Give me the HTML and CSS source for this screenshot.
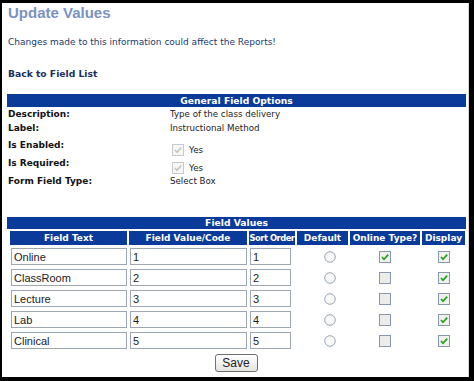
FILE: index.html
```html
<!DOCTYPE html>
<html lang="en">
<head>
  <meta charset="UTF-8" />
  <title>Update Values</title>
  <link rel="stylesheet" href="styles.css">
</head>
<body>
  <svg class="defs" width="0" height="0">
    <symbol id="cb-on" viewBox="0 0 12 12">
      <rect x="0.5" y="0.5" width="11" height="11" fill="#f1f1ec" stroke="#8797ad"/>
      <path d="M3 6 L5 8.3 L9.2 3.6" fill="none" stroke="#22a022" stroke-width="1.7"/>
    </symbol>
    <symbol id="cb-off" viewBox="0 0 12 12">
      <rect x="0.5" y="0.5" width="11" height="11" fill="#ececea" stroke="#8797ad"/>
    </symbol>
    <symbol id="cb-dis" viewBox="0 0 12 12">
      <rect x="0.5" y="0.5" width="11" height="11" fill="#f6f6f4" stroke="#cacaca"/>
      <path d="M3 6 L5 8.3 L9.2 3.6" fill="none" stroke="#c4c4c4" stroke-width="1.5"/>
    </symbol>
    <symbol id="radio" viewBox="0 0 12 12">
      <circle cx="6" cy="6" r="5.3" fill="#f7f7f5" stroke="#9aa6b6"/>
    </symbol>
  </svg>

  <div class="page">
    <h1 class="title">Update Values</h1>
    <p class="note">Changes made to this information could affect the Reports!</p>
    <a class="back" href="#">Back to Field List</a>

    <div class="bar bar-general">General Field Options</div>
    <div class="opt">
      <span class="opt-label">Description:</span>
      <span class="opt-value">Type of the class delivery</span>
    </div>
    <div class="opt">
      <span class="opt-label">Label:</span>
      <span class="opt-value">Instructional Method</span>
    </div>
    <div class="opt opt-flag">
      <span class="opt-label">Is Enabled:</span>
      <span class="opt-value flag"><svg class="box"><use href="#cb-dis"/></svg>Yes</span>
    </div>
    <div class="opt opt-flag">
      <span class="opt-label">Is Required:</span>
      <span class="opt-value flag"><svg class="box"><use href="#cb-dis"/></svg>Yes</span>
    </div>
    <div class="opt opt-last">
      <span class="opt-label">Form Field Type:</span>
      <span class="opt-value">Select Box</span>
    </div>

    <div class="bar bar-values">Field Values</div>
    <table class="values">
      <colgroup>
        <col style="width:117px">
        <col style="width:118px">
        <col style="width:46px">
        <col style="width:51px">
        <col style="width:70px">
        <col>
      </colgroup>
      <thead>
        <tr>
          <th>Field Text</th>
          <th>Field Value/Code</th>
          <th class="tight">Sort Order</th>
          <th>Default</th>
          <th>Online Type?</th>
          <th>Display</th>
        </tr>
      </thead>
      <tbody>
        <tr>
          <td class="in"><input class="txt" type="text" value="Online"></td>
          <td class="in"><input class="txt" type="text" value="1"></td>
          <td class="in"><input class="txt sort" type="text" value="1"></td>
          <td class="def"><svg class="box"><use href="#radio"/></svg></td>
          <td><svg class="box"><use href="#cb-on"/></svg></td>
          <td><svg class="box"><use href="#cb-on"/></svg></td>
        </tr>
        <tr>
          <td class="in"><input class="txt" type="text" value="ClassRoom"></td>
          <td class="in"><input class="txt" type="text" value="2"></td>
          <td class="in"><input class="txt sort" type="text" value="2"></td>
          <td class="def"><svg class="box"><use href="#radio"/></svg></td>
          <td><svg class="box"><use href="#cb-off"/></svg></td>
          <td><svg class="box"><use href="#cb-on"/></svg></td>
        </tr>
        <tr>
          <td class="in"><input class="txt" type="text" value="Lecture"></td>
          <td class="in"><input class="txt" type="text" value="3"></td>
          <td class="in"><input class="txt sort" type="text" value="3"></td>
          <td class="def"><svg class="box"><use href="#radio"/></svg></td>
          <td><svg class="box"><use href="#cb-off"/></svg></td>
          <td><svg class="box"><use href="#cb-on"/></svg></td>
        </tr>
        <tr>
          <td class="in"><input class="txt" type="text" value="Lab"></td>
          <td class="in"><input class="txt" type="text" value="4"></td>
          <td class="in"><input class="txt sort" type="text" value="4"></td>
          <td class="def"><svg class="box"><use href="#radio"/></svg></td>
          <td><svg class="box"><use href="#cb-off"/></svg></td>
          <td><svg class="box"><use href="#cb-on"/></svg></td>
        </tr>
        <tr>
          <td class="in"><input class="txt" type="text" value="Clinical"></td>
          <td class="in"><input class="txt" type="text" value="5"></td>
          <td class="in"><input class="txt sort" type="text" value="5"></td>
          <td class="def"><svg class="box"><use href="#radio"/></svg></td>
          <td><svg class="box"><use href="#cb-off"/></svg></td>
          <td><svg class="box"><use href="#cb-on"/></svg></td>
        </tr>
      </tbody>
    </table>
    <div class="actions">
      <button type="submit" class="save">Save</button>
    </div>
  </div>
</body>
</html>
```

FILE: styles.css
```css
html, body {
  margin: 0;
  height: 100%;
}
body {
  background: #000;
  font-family: "DejaVu Sans", Verdana, sans-serif;
  overflow: hidden;
}
.defs {
  position: absolute;
}
.page {
  background: #fff;
  margin: 3px 5px 0 2px;
  height: 374px;
  border-right: 1px solid #d8d8d8;
  box-sizing: border-box;
  padding-top: 1px;
}
.title {
  font: bold 15px/18px "Liberation Sans", Arial, sans-serif;
  color: #7b92c2;
  margin: 0 0 0 6px;
}
.note {
  font-size: 9px;
  line-height: 12px;
  color: #203a6e;
  margin: 14px 0 0 6px;
}
.back {
  display: block;
  font-weight: bold;
  font-size: 9.2px;
  line-height: 14px;
  color: #1a2f5c;
  text-decoration: none;
  margin: 19px 0 0 6px;
}
.bar {
  margin-left: 5px;
  width: 459px;
  background: #0a3a9a;
  color: #fff;
  font-weight: bold;
  font-size: 9.2px;
  line-height: 13px;
  text-align: center;
}
.bar-general {
  margin-top: 13px;
}
.bar-values {
  margin-top: 29px;
  line-height: 12px;
}
.opt {
  display: grid;
  grid-template-columns: 163px 1fr;
  margin-left: 5px;
  line-height: 14px;
}
.opt-label {
  padding-left: 1px;
  font-weight: bold;
  font-size: 9px;
  color: #111;
}
.opt-value {
  font-size: 8.7px;
  color: #222;
}
.opt-flag {
  height: 18px;
}
.opt-flag .opt-label {
  padding-top: 3px;
}
.flag {
  display: flex;
  align-items: flex-end;
  gap: 5px;
  padding: 9px 0 0 2px;
  line-height: 11px;
}
.opt-last {
  padding-top: 3px;
}
.box {
  width: 12px;
  height: 12px;
  display: block;
}
.values {
  margin-left: 6px;
  width: 459px;
  border-spacing: 2px;
  table-layout: fixed;
}
.values th {
  background: #0a3a9a;
  color: #fff;
  font-size: 9px;
  font-weight: bold;
  height: 14px;
  line-height: 14px;
  padding: 0;
  white-space: nowrap;
  overflow: hidden;
}
.values th.tight {
  font-size: 8.4px;
  letter-spacing: -0.5px;
}
.values td {
  height: 19px;
  padding: 0;
}
.values td .box {
  margin: 0 auto;
}
.values td.def .box {
  margin: 0 0 0 27px;
}
.txt {
  display: block;
  box-sizing: border-box;
  width: calc(100% - 1px);
  height: 17px;
  margin-left: 1px;
  padding: 0 2px;
  border: 1px solid #9ea6b0;
  font: 11px "Liberation Sans", Arial, sans-serif;
  color: #222;
  background: #fff;
}
.txt.sort {
  width: 41px;
}
.actions {
  text-align: center;
}
.save {
  width: 43px;
  height: 18px;
  padding: 0;
  border: 1px solid #6f6f6f;
  border-radius: 3px;
  background: linear-gradient(#ffffff, #e4e4e0);
  font: 12px "Liberation Sans", Arial, sans-serif;
  color: #222;
  margin-left: 2px;
}
```
